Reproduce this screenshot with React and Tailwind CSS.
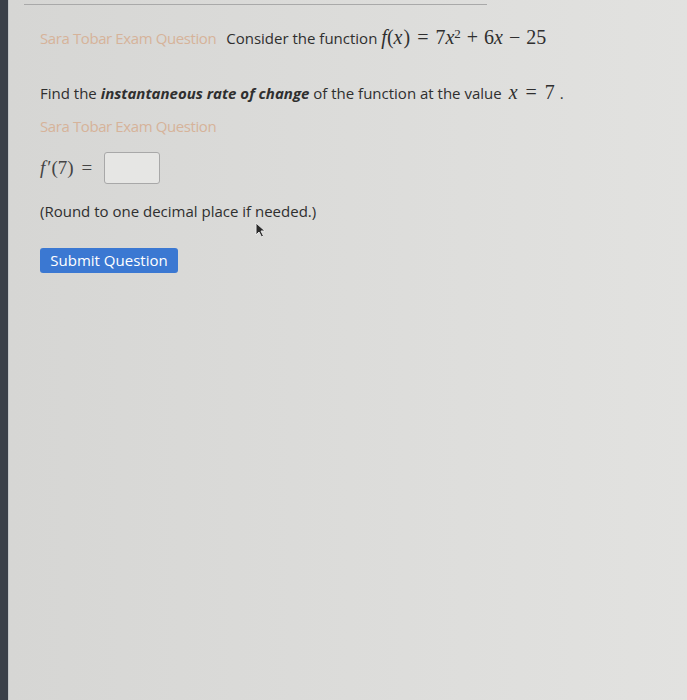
import React from "react";

const sans = { fontFamily: '"Open Sans", "Noto Sans", sans-serif' };
const math = { fontFamily: '"Liberation Serif", "DejaVu Serif", serif' };

function Cursor() {
  return (
    <svg width="12" height="16" viewBox="0 0 12 16" className="absolute left-[255px] top-[222px]">
      <path d="M1 1 L1 13 L4 10 L6.5 15 L8.5 14 L6 9 L10 9 Z" fill="#2a2a2a" stroke="#e8e8e8" strokeWidth="1" />
    </svg>
  );
}

export default function App() {
  return (
    <div className="relative flex min-h-[700px] w-[687px] bg-[#d9d9d7]" style={sans}>
      <div className="w-[8px] shrink-0 bg-[#3b4049]" />
      <div className="w-[1px] shrink-0 bg-[#c4c6c8]" />
      <div className="flex-1 bg-gradient-to-r from-[#d6d6d4] via-[#dcdcda] to-[#e2e2e0]">
        <div className="ml-[15px] mt-[4px] h-[1px] w-[463px] bg-[#a9a9a9]" />
        <div className="pl-[31px] text-[15px] text-[#2f2f2f]">
          <div className="mt-[21px] flex items-baseline">
            <span className="tracking-[-0.4px] text-[#d6b39a]">Sara Tobar Exam Question</span>
            <span className="ml-[10px]">Consider the function</span>
            <span className="ml-[4px] text-[20px] leading-[22px]" style={math}>
              <i>f</i>(<i className="pr-[1px]">x</i>)<span className="mx-[7px]">=</span>7<i>x</i>
              <sup className="text-[13px]">2</sup>
              <span className="mx-[6px]">+</span>6<i>x</i>
              <span className="mx-[6px]">−</span>25
            </span>
          </div>
          <div className="mt-[31px] flex items-baseline">
            <span>Find the <b><i>instantaneous rate of change</i></b> of the function at the value</span>
            <span className="ml-[7px] text-[20px] leading-[22px]" style={math}>
              <i>x</i>
              <span className="mx-[8px]">=</span>7
            </span>
            <span className="ml-[5px]">.</span>
          </div>
          <div className="mt-[11px] tracking-[-0.4px] text-[#d6b39a]">Sara Tobar Exam Question</div>
          <div className="mt-[14px] flex items-center">
            <span className="text-[19px] leading-[22px] text-[#444]" style={math}>
              <i className="pr-[2px]">f</i>′(7)<span className="ml-[8px]">=</span>
            </span>
            <div className="ml-[12px] h-[32px] w-[56px] rounded-[3px] border border-[#a8a8a8] bg-[#e6e6e4]" />
          </div>
          <div className="mt-[16px]">(Round to one decimal place if needed.)</div>
          <button className="mt-[26px] h-[25px] w-[138px] rounded-[3px] bg-[#3b78d2] text-[15px] text-white">
            Submit Question
          </button>
        </div>
      </div>
      <Cursor />
    </div>
  );
}
